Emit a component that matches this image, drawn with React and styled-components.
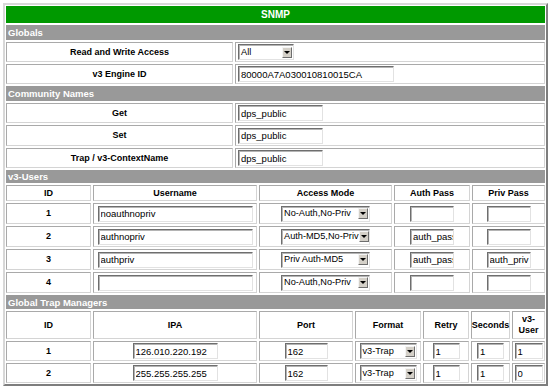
import React from "react";
import styled, { createGlobalStyle } from "styled-components";

const GlobalStyle = createGlobalStyle`
  html, body { margin: 0; padding: 0; background: #fff; }
  body { font-family: "Liberation Sans", Arial, sans-serif; }
`;

const Frame = styled.div`
  margin: 3px 0 0 3px;
  width: 545px;
  box-sizing: border-box;
  border: 2px solid;
  border-color: #d8d8d8 #7e7e7e #7e7e7e #d8d8d8;
  padding: 1px;
  display: flex;
  flex-direction: column;
  gap: 2px;
  background: #fff;
`;

const Title = styled.div`
  height: 17px;
  background: #009900;
  color: #fff;
  font-weight: bold;
  font-size: 10px;
  display: flex;
  align-items: center;
  justify-content: center;
`;

const SectionBar = styled.div`
  height: ${(p) => p.$h}px;
  background: #999999;
  color: #fff;
  font-weight: bold;
  font-size: 9.5px;
  display: flex;
  align-items: center;
  padding-left: 2px;
`;

const Row = styled.div`
  display: grid;
  grid-template-columns: ${(p) => p.$cols};
  column-gap: 2px;
  height: ${(p) => p.$h}px;
`;

const Cell = styled.div`
  box-sizing: border-box;
  border: 1px solid;
  border-color: #a9a9a9 #d4d4d4 #d4d4d4 #a9a9a9;
  background: #fff;
  display: flex;
  align-items: center;
  justify-content: ${(p) => (p.$left ? "flex-start" : "center")};
  padding-left: ${(p) => (p.$left ? "2px" : "0")};
  font-size: 9px;
  font-weight: bold;
  line-height: 11px;
  text-align: center;
  color: #000;
`;

const TextBox = styled.input`
  width: ${(p) => p.$w}px;
  height: 16px;
  box-sizing: border-box;
  margin: 0;
  border: 1px solid;
  border-color: #6e6e6e #e2e2e2 #e2e2e2 #6e6e6e;
  box-shadow: inset 1px 1px 0 #b4b4b4;
  padding: 0 0 0 2px;
  font: 9.5px "Liberation Sans", Arial, sans-serif;
  color: #000;
  background: #fff;
  outline: none;
`;

const SelectBox = styled.div`
  width: ${(p) => p.$w}px;
  height: 16px;
  box-sizing: border-box;
  border: 1px solid;
  border-color: #6e6e6e #e2e2e2 #e2e2e2 #6e6e6e;
  box-shadow: inset 1px 1px 0 #b4b4b4;
  background: #fff;
  display: flex;
  align-items: center;
  padding: 0 1px 0 2px;
  font-size: 9.2px;
  font-weight: normal;
  color: #000;
`;

const SelectText = styled.span`
  flex: 1;
  text-align: left;
  white-space: nowrap;
`;

const SelectButton = styled.span`
  width: 10px;
  height: 11px;
  flex: none;
  box-sizing: border-box;
  background: #d4d0c8;
  border: 1px solid;
  border-color: #f4f4f4 #6e6e6e #6e6e6e #f4f4f4;
  display: flex;
  align-items: center;
  justify-content: center;
  &::after {
    content: "";
    border-left: 3px solid transparent;
    border-right: 3px solid transparent;
    border-top: 3px solid #000;
  }
`;

const Select = ({ w, value }) => (
  <SelectBox $w={w}>
    <SelectText>{value}</SelectText>
    <SelectButton />
  </SelectBox>
);

const Field = ({ w, value }) => <TextBox $w={w} defaultValue={value} readOnly />;

const G_COLS = "227px 1fr";
const U_COLS = "85px 164px 133px 76px 1fr";
const T_COLS = "85px 164px 94px 66px 46px 39px 1fr";

const users = [
  { id: 1, name: "noauthnopriv", mode: "No-Auth,No-Priv", auth: "", priv: "" },
  { id: 2, name: "authnopriv", mode: "Auth-MD5,No-Priv", auth: "auth_pass", priv: "" },
  { id: 3, name: "authpriv", mode: "Priv Auth-MD5", auth: "auth_pass", priv: "auth_priv" },
  { id: 4, name: "", mode: "No-Auth,No-Priv", auth: "", priv: "" },
];

const traps = [
  { id: 1, ip: "126.010.220.192", port: "162", fmt: "v3-Trap", retry: "1", sec: "1", user: "1" },
  { id: 2, ip: "255.255.255.255", port: "162", fmt: "v3-Trap", retry: "1", sec: "1", user: "0" },
];

export default function App() {
  return (
    <>
      <GlobalStyle />
      <Frame>
        <Title>SNMP</Title>

        <SectionBar $h={15}>Globals</SectionBar>
        <Row $cols={G_COLS} $h={20}>
          <Cell>Read and Write Access</Cell>
          <Cell $left>
            <Select w={56} value="All" />
          </Cell>
        </Row>
        <Row $cols={G_COLS} $h={20}>
          <Cell>v3 Engine ID</Cell>
          <Cell $left>
            <Field w={156} value="80000A7A030010810015CA" />
          </Cell>
        </Row>

        <SectionBar $h={15}>Community Names</SectionBar>
        <Row $cols={G_COLS} $h={20}>
          <Cell>Get</Cell>
          <Cell $left>
            <Field w={85} value="dps_public" />
          </Cell>
        </Row>
        <Row $cols={G_COLS} $h={21}>
          <Cell>Set</Cell>
          <Cell $left>
            <Field w={85} value="dps_public" />
          </Cell>
        </Row>
        <Row $cols={G_COLS} $h={20}>
          <Cell>Trap / v3-ContextName</Cell>
          <Cell $left>
            <Field w={85} value="dps_public" />
          </Cell>
        </Row>

        <SectionBar $h={13}>v3-Users</SectionBar>
        <Row $cols={U_COLS} $h={16}>
          <Cell>ID</Cell>
          <Cell>Username</Cell>
          <Cell>Access Mode</Cell>
          <Cell>Auth Pass</Cell>
          <Cell>Priv Pass</Cell>
        </Row>
        {users.map((u) => (
          <Row key={u.id} $cols={U_COLS} $h={21}>
            <Cell>{u.id}</Cell>
            <Cell>
              <Field w={155} value={u.name} />
            </Cell>
            <Cell>
              <Select w={89} value={u.mode} />
            </Cell>
            <Cell>
              <Field w={44} value={u.auth} />
            </Cell>
            <Cell>
              <Field w={44} value={u.priv} />
            </Cell>
          </Row>
        ))}

        <SectionBar $h={14}>Global Trap Managers</SectionBar>
        <Row $cols={T_COLS} $h={28}>
          <Cell>ID</Cell>
          <Cell>IPA</Cell>
          <Cell>Port</Cell>
          <Cell>Format</Cell>
          <Cell>Retry</Cell>
          <Cell>Seconds</Cell>
          <Cell>
            v3-
            <br />
            User
          </Cell>
        </Row>
        {traps.map((t) => (
          <Row key={t.id} $cols={T_COLS} $h={20}>
            <Cell>{t.id}</Cell>
            <Cell>
              <Field w={85} value={t.ip} />
            </Cell>
            <Cell>
              <Field w={43} value={t.port} />
            </Cell>
            <Cell>
              <Select w={57} value={t.fmt} />
            </Cell>
            <Cell>
              <Field w={27} value={t.retry} />
            </Cell>
            <Cell>
              <Field w={27} value={t.sec} />
            </Cell>
            <Cell>
              <Field w={28} value={t.user} />
            </Cell>
          </Row>
        ))}
      </Frame>
    </>
  );
}
